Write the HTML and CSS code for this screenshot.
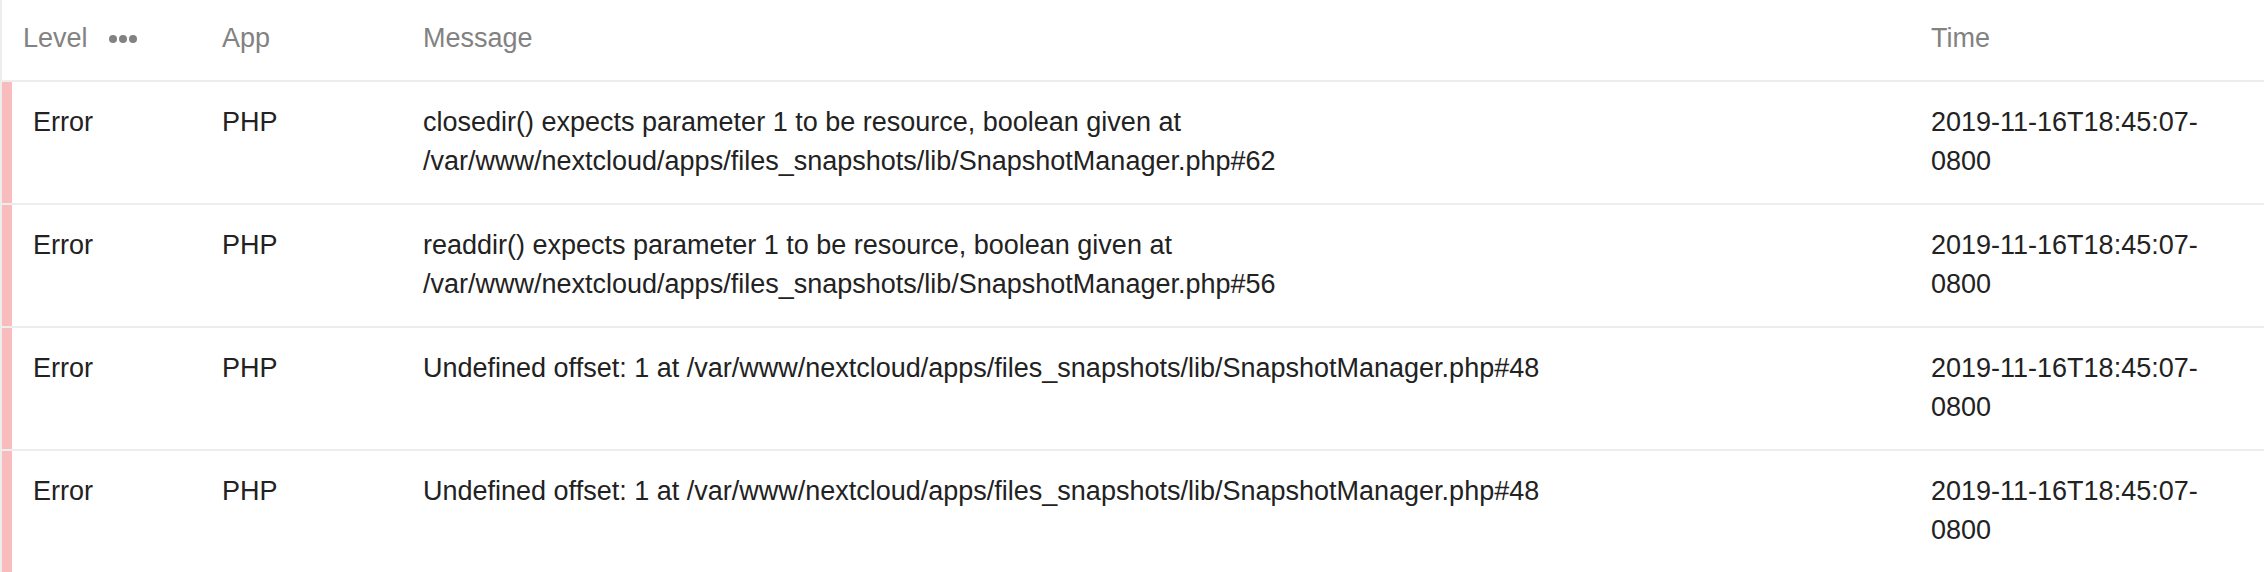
FILE: index.html
```html
<!DOCTYPE html>
<html lang="en">
<head>
    <meta charset="UTF-8">
    <meta name="viewport" content="width=device-width, initial-scale=1.0">
    <title>Logging</title>
    <link rel="stylesheet" href="styles.css">
</head>
<body>
    <div class="log-table">
        <div class="log-row log-head">
            <div class="cell level">
                Level
                <button class="more" title="More">
                    <svg width="28" height="8" viewBox="0 0 28 8">
                        <circle cx="4" cy="4" r="4"/>
                        <circle cx="14" cy="4" r="4"/>
                        <circle cx="24" cy="4" r="4"/>
                    </svg>
                </button>
            </div>
            <div class="cell app">App</div>
            <div class="cell message">Message</div>
            <div class="cell time">Time</div>
        </div>

        <div class="log-row error">
            <div class="cell level">Error</div>
            <div class="cell app">PHP</div>
            <div class="cell message">closedir() expects parameter 1 to be resource, boolean given at /var/www/nextcloud/apps/files_snapshots/lib/SnapshotManager.php#62</div>
            <div class="cell time">2019-11-16T18:45:07-<wbr>0800</div>
        </div>

        <div class="log-row error">
            <div class="cell level">Error</div>
            <div class="cell app">PHP</div>
            <div class="cell message">readdir() expects parameter 1 to be resource, boolean given at /var/www/nextcloud/apps/files_snapshots/lib/SnapshotManager.php#56</div>
            <div class="cell time">2019-11-16T18:45:07-<wbr>0800</div>
        </div>

        <div class="log-row error">
            <div class="cell level">Error</div>
            <div class="cell app">PHP</div>
            <div class="cell message">Undefined offset: 1 at /var/www/nextcloud/apps/files_snapshots/lib/SnapshotManager.php#48</div>
            <div class="cell time">2019-11-16T18:45:07-<wbr>0800</div>
        </div>

        <div class="log-row error">
            <div class="cell level">Error</div>
            <div class="cell app">PHP</div>
            <div class="cell message">Undefined offset: 1 at /var/www/nextcloud/apps/files_snapshots/lib/SnapshotManager.php#48</div>
            <div class="cell time">2019-11-16T18:45:07-<wbr>0800</div>
        </div>
    </div>
</body>
</html>
```
FILE: styles.css
```css
body {
    margin: 0;
    background: #fff;
    color: #222;
    font-family: "Liberation Sans", Arial, sans-serif;
    font-size: 27px;
    line-height: 39px;
}
.log-table {
    border-left: 2px solid #ededed;
}
.log-row {
    display: grid;
    grid-template-columns: 199px 201px 1fr 354px;
    border-bottom: 2px solid #ededed;
}
.cell {
    padding: 21px 21px 22px;
    min-width: 0;
}
.log-head {
    color: #828282;
}
.log-head .cell {
    padding: 19px 21px 22px;
}
.log-head .level {
    display: flex;
    align-items: center;
}
.more {
    display: flex;
    align-items: center;
    margin: 0 0 0 21px;
    padding: 0;
    border: none;
    background: none;
    cursor: pointer;
}
.more svg {
    fill: #828282;
}
.error .level {
    border-left: 10px solid #f8bcbc;
}
```
